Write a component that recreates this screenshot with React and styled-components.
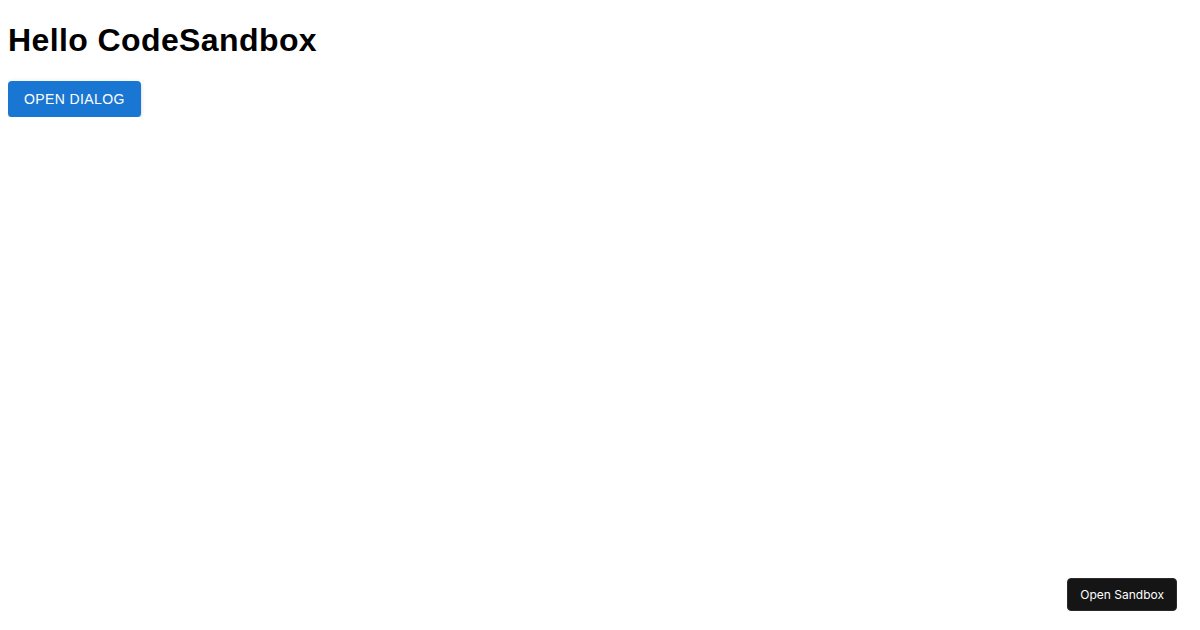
import React from "react";
import styled, { createGlobalStyle } from "styled-components";

const Global = createGlobalStyle`
  body {
    margin: 8px;
    font-family: "Liberation Sans", Arial, sans-serif;
    background: #fff;
  }
`;

const Title = styled.h1`
  font-family: "Liberation Sans", Arial, sans-serif;
  font-size: 32px;
  font-weight: 700;
  letter-spacing: 0.4px;
  margin: 14.44px 0 21.44px;
  color: #000;
`;

const PrimaryButton = styled.button`
  font-family: "Liberation Sans", Helvetica, Arial, sans-serif;
  font-weight: 400;
  font-size: 14px;
  line-height: 1.75;
  letter-spacing: 0.02857em;
  text-transform: uppercase;
  min-width: 64px;
  padding: 6px 16px;
  border: 0;
  border-radius: 4px;
  color: #fff;
  background-color: #1976d2;
  box-shadow: 0px 3px 1px -2px rgba(0,0,0,0.2), 0px 2px 2px 0px rgba(0,0,0,0.14), 0px 1px 5px 0px rgba(0,0,0,0.12);
  cursor: pointer;
`;

const SandboxLink = styled.a`
  position: fixed;
  right: 23px;
  bottom: 19px;
  display: flex;
  align-items: center;
  height: 33px;
  box-sizing: border-box;
  padding: 0 12px;
  background: #151515;
  color: #fff;
  border-radius: 4px;
  border: 1px solid #2a2a2a;
  font-family: Inter, "Liberation Sans", sans-serif;
  font-size: 12px;
  text-decoration: none;
`;

export default function App() {
  return (
    <>
      <Global />
      <Title>Hello CodeSandbox</Title>
      <PrimaryButton>Open dialog</PrimaryButton>
      <SandboxLink href="#">Open Sandbox</SandboxLink>
    </>
  );
}
